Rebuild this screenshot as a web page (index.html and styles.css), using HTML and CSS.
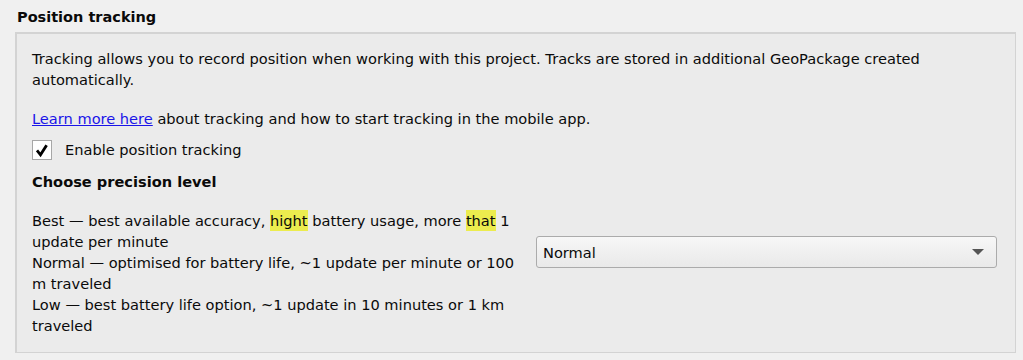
FILE: index.html
```html
<!DOCTYPE html>
<html>
<head>
<meta charset="utf-8">
<link rel="stylesheet" href="styles.css">
</head>
<body>
<div class="page">
  <div class="title">Position tracking</div>
  <div class="group">
    <p class="intro">Tracking allows you to record position when working with this project. Tracks are stored in additional GeoPackage created<br>automatically.</p>
    <p class="learn"><a href="#" class="link">Learn more here</a> about tracking and how to start tracking in the mobile app.</p>
    <div class="check-row">
      <span class="checkbox"><svg width="16" height="16" viewBox="0 0 16 16"><path d="M3 8.4 L6.5 12.8 L12.6 3.2" fill="none" stroke="#000" stroke-width="2.8" stroke-linejoin="miter" stroke-linecap="butt"/></svg></span>
      <span class="check-label">Enable position tracking</span>
    </div>
    <div class="subtitle">Choose precision level</div>
    <div class="precision">
      <div class="desc">Best — best available accuracy, <span class="hl">hight</span> battery usage, more <span class="hl">that</span> 1<br>update per minute<br>Normal — optimised for battery life, ~1 update per minute or 100<br>m traveled<br>Low — best battery life option, ~1 update in 10 minutes or 1 km<br>traveled</div>
      <div class="combo">
        <span class="combo-text">Normal</span>
        <span class="arrow"></span>
      </div>
    </div>
  </div>
</div>
</body>
</html>
```
FILE: styles.css
```css
html, body {
  margin: 0;
  padding: 0;
  background: #f0f0f0;
}
body {
  font-family: "DejaVu Sans", Verdana, sans-serif;
  font-size: 14.6px;
  line-height: 21px;
  color: #0a0a0a;
  width: 1023px;
  height: 360px;
  overflow: hidden;
}
.page {
  padding: 7px 0 0 0;
}
.title {
  font-weight: bold;
  padding-left: 17px;
  height: 21px;
  font-size: 14.5px;
}
.group {
  margin: 4px 0 0 15px;
  width: 998px;
  height: 318px;
  border: 1px solid #d3d3d3;
  border-top-width: 2px;
  border-left-width: 2px;
  background: #ebebeb;
  box-sizing: content-box;
  padding: 0;
}
.group > * {
  margin-left: 15px;
}
.intro {
  margin-top: 14px;
  margin-bottom: 0;
}
.learn {
  margin-top: 18px;
  margin-bottom: 0;
}
.link {
  color: #1a14e8;
  text-decoration: underline;
}
.check-row {
  display: flex;
  align-items: center;
  margin-top: 10px;
  height: 21px;
}
.checkbox {
  width: 18px;
  height: 18px;
  border: 1px solid #a7a7a7;
  background: #fff;
  display: flex;
  align-items: center;
  justify-content: center;
}
.check-label {
  margin-left: 13px;
}
.subtitle {
  font-weight: bold;
  font-size: 14.6px;
  margin-top: 11px;
}
.precision {
  display: flex;
  align-items: flex-start;
  margin-top: 18px;
}
.desc {
  width: 504px;
}
.hl {
  background: #ecec4e;
  padding: 2px 0;
}
.combo {
  margin-top: 26px;
  width: 461px;
  height: 32px;
  border: 1px solid #ababab;
  border-radius: 3px;
  background: linear-gradient(#f7f7f7, #e9e9e9);
  display: flex;
  align-items: center;
  justify-content: space-between;
  padding: 0 12px 0 6px;
  box-sizing: border-box;
}
.combo-text {
  color: #0a0a0a;
}
.arrow {
  width: 0;
  height: 0;
  border-left: 6px solid transparent;
  border-right: 6px solid transparent;
  border-top: 6px solid #555;
}
```
